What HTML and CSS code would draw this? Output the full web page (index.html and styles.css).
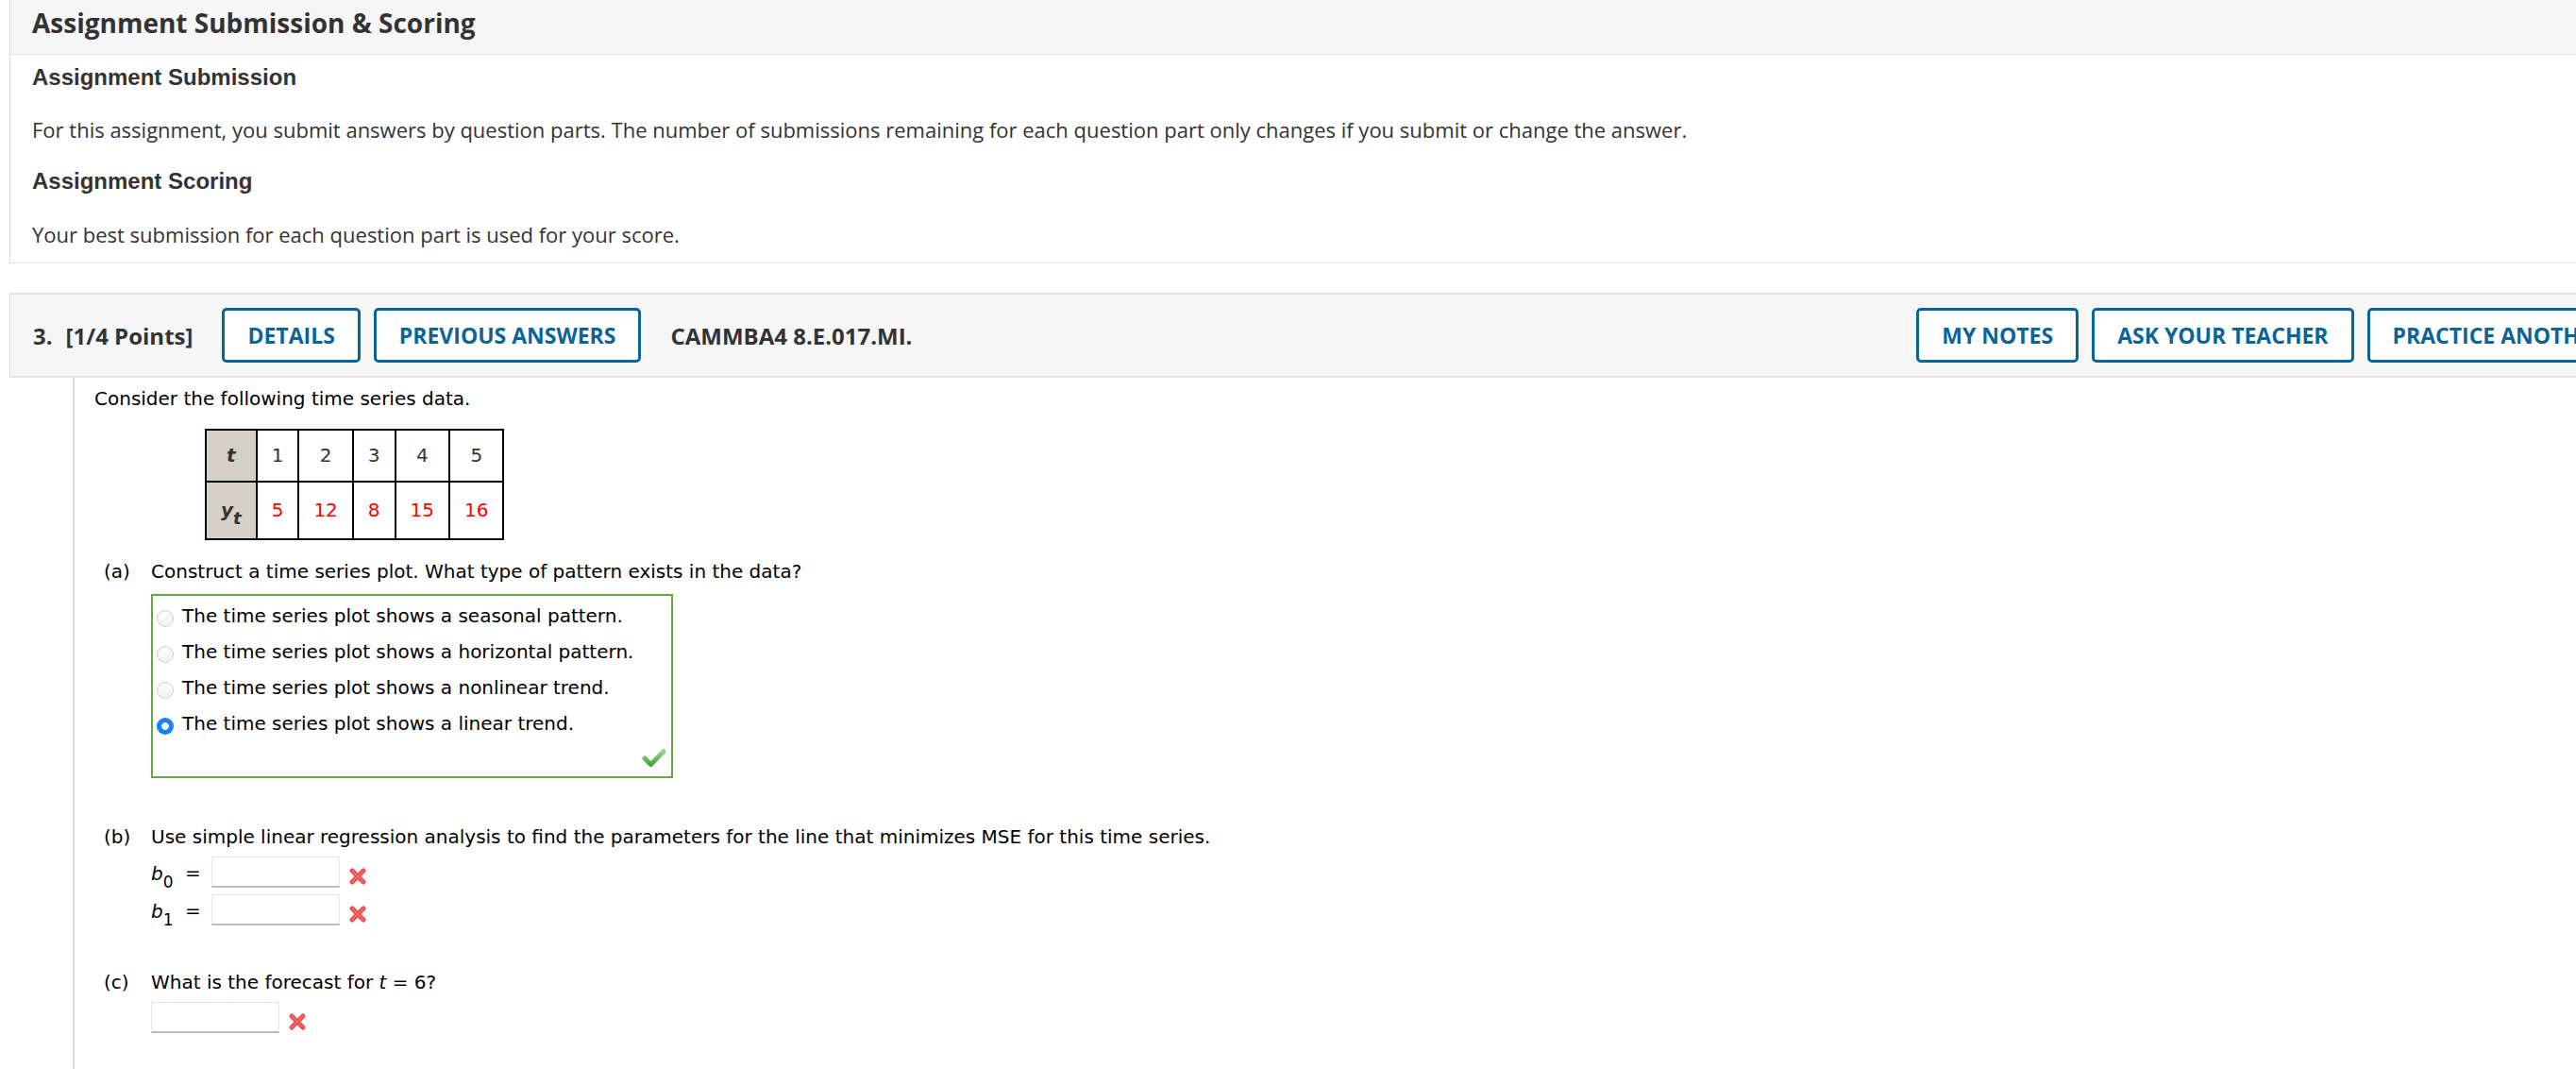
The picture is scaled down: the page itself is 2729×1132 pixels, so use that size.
FILE: index.html
```html
<!DOCTYPE html>
<html lang="en">
<head>
<meta charset="utf-8">
<title>Assignment Submission &amp; Scoring</title>
<link rel="stylesheet" href="styles.css">
</head>
<body>
<div class="page">
  <section class="intro">
    <h2 class="intro-title">Assignment Submission &amp; Scoring</h2>
    <div class="intro-body">
      <h3>Assignment Submission</h3>
      <p>For this assignment, you submit answers by question parts. The number of submissions remaining for each question part only changes if you submit or change the answer.</p>
      <h3>Assignment Scoring</h3>
      <p>Your best submission for each question part is used for your score.</p>
    </div>
  </section>

  <section class="question">
    <div class="q-header">
      <span class="q-num">3.</span>
      <span class="q-points">[1/4 Points]</span>
      <button class="btn" type="button">DETAILS</button>
      <button class="btn" type="button">PREVIOUS ANSWERS</button>
      <span class="q-code">CAMMBA4 8.E.017.MI.</span>
      <div class="q-actions">
        <button class="btn" type="button">MY NOTES</button>
        <button class="btn" type="button">ASK YOUR TEACHER</button>
        <button class="btn" type="button">PRACTICE ANOTHER</button>
      </div>
    </div>

    <div class="q-body">
      <p class="lead">Consider the following time series data.</p>
      <table class="data">
        <tr class="row-t">
          <th>t</th><td>1</td><td>2</td><td>3</td><td>4</td><td>5</td>
        </tr>
        <tr class="row-y">
          <th>y<sub>t</sub></th><td>5</td><td>12</td><td>8</td><td>15</td><td>16</td>
        </tr>
      </table>

      <div class="part part-a">
        <span class="part-label">(a)</span>
        <div class="part-main">
          <p>Construct a time series plot. What type of pattern exists in the data?</p>
          <div class="choices">
            <div class="choice"><span class="radio"></span><span class="choice-text">The time series plot shows a seasonal pattern.</span></div>
            <div class="choice"><span class="radio"></span><span class="choice-text">The time series plot shows a horizontal pattern.</span></div>
            <div class="choice"><span class="radio"></span><span class="choice-text">The time series plot shows a nonlinear trend.</span></div>
            <div class="choice"><span class="radio radio-on"></span><span class="choice-text">The time series plot shows a linear trend.</span></div>
            <svg class="check" width="26" height="21" viewBox="0 0 26 21" aria-hidden="true">
              <defs>
                <linearGradient id="gchk" x1="0" y1="0" x2="0" y2="1">
                  <stop offset="0" stop-color="#9bd68e"/>
                  <stop offset="1" stop-color="#45a345"/>
                </linearGradient>
              </defs>
              <polyline points="3,11 9.5,17.5 23,3.5" fill="none" stroke="url(#gchk)" stroke-width="5" stroke-linecap="round" stroke-linejoin="round"/>
            </svg>
          </div>
        </div>
      </div>

      <div class="part part-b">
        <span class="part-label">(b)</span>
        <div class="part-main">
          <p>Use simple linear regression analysis to find the parameters for the line that minimizes MSE for this time series.</p>
          <div class="eq-row">
            <span class="var">b<sub>0</sub></span><span class="eq">=</span><input class="answer" type="text">
            <svg class="cross" width="20" height="20" viewBox="0 0 20 20" aria-hidden="true">
              <path d="M4 4 L16 16 M16 4 L4 16" stroke="#f04a4d" stroke-width="5" stroke-linecap="round"/>
              <path d="M4 4 L16 16 M16 4 L4 16" stroke="#ff8a8c" stroke-width="1.4" stroke-linecap="round" opacity="0.6"/>
            </svg>
          </div>
          <div class="eq-row">
            <span class="var">b<sub>1</sub></span><span class="eq">=</span><input class="answer" type="text">
            <svg class="cross" width="20" height="20" viewBox="0 0 20 20" aria-hidden="true">
              <path d="M4 4 L16 16 M16 4 L4 16" stroke="#f04a4d" stroke-width="5" stroke-linecap="round"/>
              <path d="M4 4 L16 16 M16 4 L4 16" stroke="#ff8a8c" stroke-width="1.4" stroke-linecap="round" opacity="0.6"/>
            </svg>
          </div>
        </div>
      </div>

      <div class="part part-c">
        <span class="part-label">(c)</span>
        <div class="part-main">
          <p>What is the forecast for <i>t</i> = 6?</p>
          <div class="eq-row">
            <input class="answer" type="text">
            <svg class="cross" width="20" height="20" viewBox="0 0 20 20" aria-hidden="true">
              <path d="M4 4 L16 16 M16 4 L4 16" stroke="#f04a4d" stroke-width="5" stroke-linecap="round"/>
              <path d="M4 4 L16 16 M16 4 L4 16" stroke="#ff8a8c" stroke-width="1.4" stroke-linecap="round" opacity="0.6"/>
            </svg>
          </div>
        </div>
      </div>
    </div>
  </section>
</div>
</body>
</html>
```

FILE: styles.css
```css
html, body {
  margin: 0;
  padding: 0;
  overflow: hidden;
  background: #fff;
}

body {
  font-family: "Open Sans", "Liberation Sans", sans-serif;
  color: #333;
}

.page {
  padding-left: 10px;
  width: 2802px;
}

/* ---------- intro box ---------- */
.intro {
  border-left: 1px solid #dedede;
  border-bottom: 1px solid #dedede;
}

.intro-title {
  margin: 0;
  padding: 5px 23px 14px;
  background: #f6f6f6;
  border-bottom: 1px solid #dedede;
  font-size: 28px;
  font-weight: 700;
  line-height: 38px;
  color: #333;
}

.intro-body {
  padding: 10px 23px 16px;
}

.intro-body h3 {
  margin: 0;
  font-family: "Liberation Sans", Arial, sans-serif;
  font-size: 24px;
  font-weight: 700;
  line-height: 28px;
  color: #333;
}

.intro-body p {
  margin: 27px 0 0;
  font-size: 22px;
  line-height: 28px;
}

.intro-body p + h3 {
  margin-top: 27px;
}

.intro-body p:last-child {
  margin-top: 28px;
}

/* ---------- question ---------- */
.question {
  margin-top: 31px;
}

.q-header {
  display: flex;
  align-items: center;
  height: 86px;
  padding: 0 24px;
  background: #f6f6f6;
  border-top: 2px solid #e1e1e1;
  border-bottom: 2px solid #e1e1e1;
  border-left: 1px solid #e1e1e1;
  font-size: 24px;
  font-weight: 700;
  color: #333;
  white-space: nowrap;
}

.q-num {
  margin-right: 14px;
}

.q-points {
  margin-right: 31px;
}

.q-code {
  margin-left: 31px;
}

.btn {
  box-sizing: border-box;
  height: 58px;
  padding: 0 24px;
  border: 3px solid #0b6498;
  border-radius: 5px;
  background: #fff;
  color: #0b6498;
  font-family: "Open Sans", "Liberation Sans", sans-serif;
  font-size: 23px;
  font-weight: 700;
  line-height: 52px;
  white-space: nowrap;
}

.btn + .btn {
  margin-left: 14px;
}

.q-actions {
  display: flex;
  margin-left: auto;
}

.q-body {
  margin-left: 67px;
  padding: 10px 0 80px 21px;
  border-left: 2px solid #dcdcdc;
  font-family: "DejaVu Sans", Verdana, sans-serif;
  font-size: 20px;
  line-height: 24px;
  color: #000;
}

.q-body p {
  margin: 0;
}

/* data table */
.data {
  margin: 20px 0 0 117px;
  border-collapse: separate;
  border-spacing: 0;
  border-top: 2px solid #000;
  border-left: 2px solid #000;
}

.data th,
.data td {
  padding: 0 15px;
  border-right: 2px solid #000;
  border-bottom: 2px solid #000;
  text-align: center;
  font-weight: normal;
}

.data th {
  background: #d4d0c8;
  color: #333;
  font-weight: 700;
  font-style: italic;
}

.row-t th,
.row-t td {
  line-height: 53px;
}

.row-t td {
  color: #333;
}

.row-y th,
.row-y td {
  line-height: 59px;
}

.row-y td {
  color: #f00;
}

.data sub {
  font-size: 18px;
  line-height: 0;
  vertical-align: -8px;
}

/* parts */
.part {
  display: flex;
  padding-left: 10px;
}

.part-label {
  flex: none;
  width: 50px;
}

.part-a {
  margin-top: 21px;
}

.part-b {
  margin-top: 50px;
}

.part-c {
  margin-top: 48px;
}

.choices {
  display: flex;
  flex-direction: column;
  box-sizing: border-box;
  width: 553px;
  margin-top: 12px;
  padding: 2px 5px 9px 4px;
  border: 2px solid #64a846;
}

.choice {
  display: flex;
  align-items: flex-start;
  line-height: 38px;
}

.radio {
  flex: none;
  box-sizing: border-box;
  width: 18px;
  height: 18px;
  margin-top: 13px;
  border: 1px solid #cfcfcf;
  border-radius: 50%;
  background: linear-gradient(#ffffff, #f1f1f1);
  box-shadow: inset 0 1px 1px rgba(0, 0, 0, 0.05);
}

.radio-on {
  border: none;
  background: radial-gradient(circle, #ffffff 0 3.5px, #1a82f5 4.2px);
}

.choice-text {
  margin-left: 9px;
}

.check {
  align-self: flex-end;
  margin-top: 7px;
}

.eq-row {
  display: flex;
  align-items: center;
  margin-top: 9px;
}

.eq-row + .eq-row {
  margin-top: 7px;
}

.var {
  flex: none;
  width: 36px;
  padding-top: 3px;
  font-style: italic;
}

.var sub {
  font-size: 17px;
  line-height: 0;
  vertical-align: -8px;
  font-style: normal;
}

.eq {
  flex: none;
  width: 17px;
  margin-right: 11px;
  text-align: center;
}

.answer {
  box-sizing: border-box;
  width: 136px;
  height: 33px;
  margin: 0;
  padding: 0 4px;
  border: 1px solid #e4e4e4;
  border-bottom: 2px solid #bdbdbd;
  background: #fff;
  font-family: inherit;
  font-size: 18px;
}

.cross {
  flex: none;
  margin-left: 9px;
  margin-top: 8px;
}
```
